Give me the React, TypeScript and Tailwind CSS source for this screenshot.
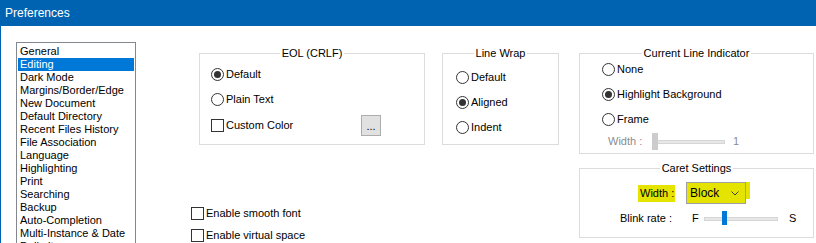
import React from 'react';

const font = 'font-["Liberation_Sans",Arial,sans-serif]';

const categories = [
  'General',
  'Editing',
  'Dark Mode',
  'Margins/Border/Edge',
  'New Document',
  'Default Directory',
  'Recent Files History',
  'File Association',
  'Language',
  'Highlighting',
  'Print',
  'Searching',
  'Backup',
  'Auto-Completion',
  'Multi-Instance & Date',
  'Delimiter',
];

function Radio({ label, checked = false }: { label: string; checked?: boolean }) {
  return (
    <div className="flex items-center h-[13px] gap-[2px]">
      <span className="w-[13px] h-[13px] rounded-full border border-[#333] bg-white flex items-center justify-center shrink-0">
        {checked && <span className="w-[7px] h-[7px] rounded-full bg-[#333]" />}
      </span>
      <span className="leading-[13px] whitespace-nowrap">{label}</span>
    </div>
  );
}

function Check({ label }: { label: string }) {
  return (
    <div className="flex items-center h-[13px] gap-[2px]">
      <span className="w-[13px] h-[13px] border border-[#333] bg-white shrink-0" />
      <span className="leading-[13px] whitespace-nowrap">{label}</span>
    </div>
  );
}

function Group({ title, className, children }: { title: string; className: string; children: React.ReactNode }) {
  return (
    <fieldset className={`border border-[#dcdcdc] ${className}`}>
      <legend className="mx-auto px-[2px] leading-[13px]">{title}</legend>
      {children}
    </fieldset>
  );
}

export default function App() {
  return (
    <div className={`w-[816px] h-[243px] overflow-hidden bg-white text-[11px] text-black ${font}`}>
      <div className="h-[26px] bg-[#0063b1] text-white text-[12px] flex items-center pl-[5px] pb-[1px]">
        Preferences
      </div>
      <div className="flex h-[217px] border-l border-[#0063b1]">
        {/* category list */}
        <div className="ml-[15px] mt-[16px] w-[120px] h-[230px] border border-[#828790] px-[1px] pt-[2px] shrink-0">
          {categories.map((c) => (
            <div
              key={c}
              className={`h-[13px] leading-[13px] pl-[2px] whitespace-nowrap ${c === 'Editing' ? 'bg-[#0078d7] text-white' : ''}`}
            >
              {c}
            </div>
          ))}
        </div>

        {/* middle column */}
        <div className="ml-[55px] mt-[21px] flex flex-col w-[370px] shrink-0">
          <div className="flex">
            <Group title="EOL (CRLF)" className="ml-[8px] w-[226px] h-[98px]">
              <div className="pl-[11px] pt-[8px] flex flex-col gap-[12px]">
                <Radio label="Default" checked />
                <Radio label="Plain Text" />
                <div className="flex items-center h-[13px] mt-[1px]">
                  <Check label="Custom Color" />
                  <button className="ml-auto mr-[43px] w-[20px] h-[21px] -my-[4px] bg-[#e1e1e1] border border-[#adadad] leading-[10px] text-[11px]">
                    ...
                  </button>
                </div>
              </div>
            </Group>
            <Group title="Line Wrap" className="ml-[17px] w-[117px] h-[98px]">
              <div className="pl-[13px] pt-[11px] flex flex-col gap-[12px]">
                <Radio label="Default" />
                <Radio label="Aligned" checked />
                <Radio label="Indent" />
              </div>
            </Group>
          </div>
          <div className="mt-[62px] flex flex-col gap-[9px]">
            <Check label="Enable smooth font" />
            <Check label="Enable virtual space" />
          </div>
        </div>

        {/* right column */}
        <div className="ml-[18px] mt-[21px] flex flex-col w-[235px] shrink-0">
          <Group title="Current Line Indicator" className="w-[235px] h-[107px]">
            <div className="pl-[22px] pt-[3px] flex flex-col gap-[12px]">
              <Radio label="None" />
              <Radio label="Highlight Background" checked />
              <Radio label="Frame" />
            </div>
            <div className="flex items-center pl-[28px] mt-[7px] text-[#8c8c8c] h-[17px]">
              <span className="w-[44px] whitespace-nowrap">Width :</span>
              <div className="relative w-[73px] h-[17px] flex items-center">
                <div className="w-full h-[4px] bg-[#e7e7e7] border border-[#d6d6d6]" />
                <div className="absolute left-0 top-0 w-[6px] h-[17px] bg-[#cccccc]" />
              </div>
              <span className="ml-[8px]">1</span>
            </div>
          </Group>
          <Group title="Caret Settings" className="mt-[8px] w-[235px] h-[76px]">
            <div className="flex items-center mt-[7px] h-[22px]">
              <span className="ml-[58px] w-[37px] h-[17px] leading-[17px] bg-[#e4e400] pl-[2px] whitespace-nowrap">
                Width :
              </span>
              <div className="ml-[11px] w-[60px] h-[22px] bg-[#e4e400] border border-[#a0a0a0] flex items-center pl-[3px] pr-[6px]">
                <span className="text-[12px]">Block</span>
                <svg className="ml-auto" width="8" height="5" viewBox="0 0 8 5">
                  <path d="M0.5 0.5 L4 4 L7.5 0.5" fill="none" stroke="#404040" strokeWidth="1" />
                </svg>
              </div>
              <span className="w-[4px] h-[17px] bg-[#e4e400] self-start" />
            </div>
            <div className="flex items-center mt-[6px] h-[17px]">
              <span className="ml-[40px] w-[72px] whitespace-nowrap">Blink rate :</span>
              <span className="w-[12px]">F</span>
              <div className="relative w-[74px] h-[17px] flex items-center">
                <div className="w-full h-[4px] bg-[#e7e7e7] border border-[#d6d6d6]" />
                <div className="absolute left-[18px] top-[1px] w-[5px] h-[14px] bg-[#0078d7]" />
              </div>
              <span className="ml-[11px]">S</span>
            </div>
          </Group>
        </div>
      </div>
    </div>
  );
}
